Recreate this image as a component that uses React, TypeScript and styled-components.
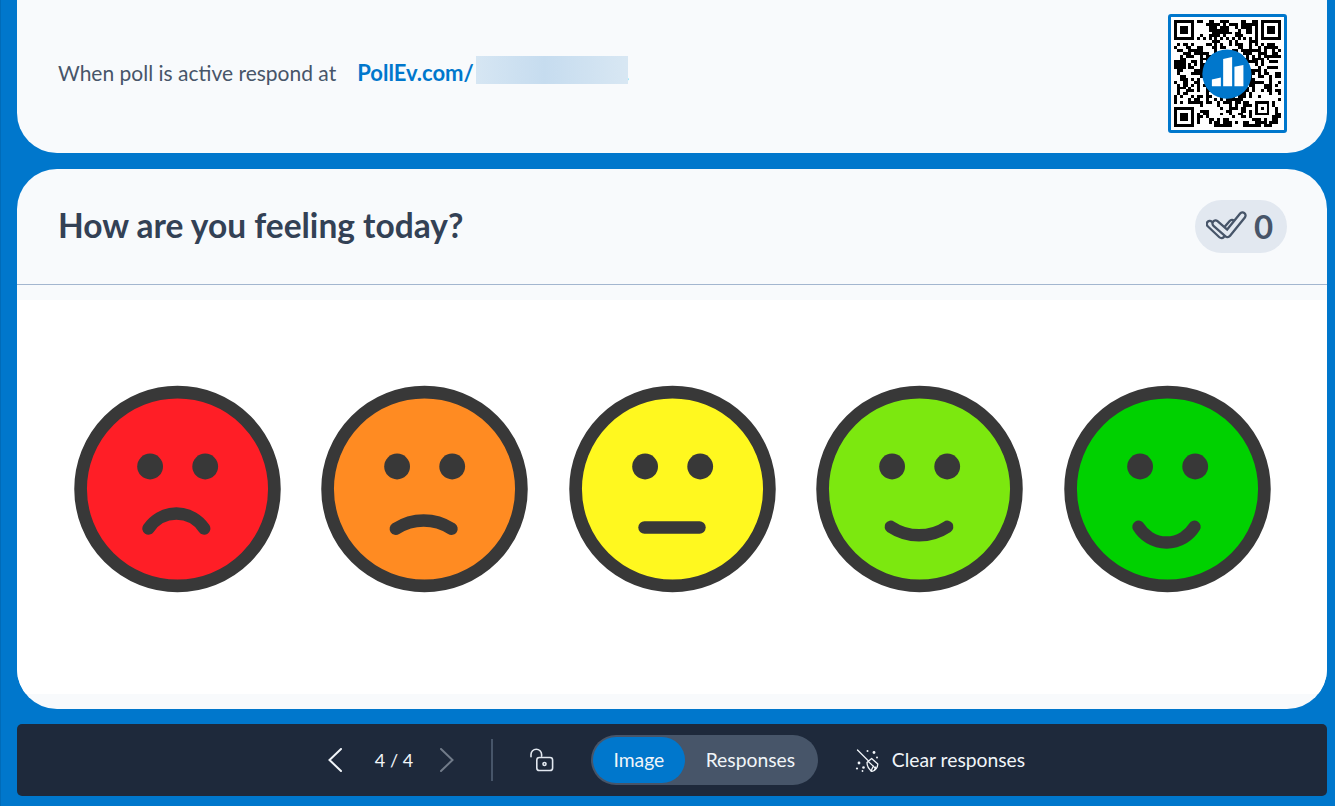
import React from "react";
import styled, { createGlobalStyle } from "styled-components";

const GlobalStyle = createGlobalStyle`
  html, body { margin: 0; padding: 0; height: 806px; overflow: hidden; background: #0077cc; }
  body { font-family: "Lato", "Noto Sans", sans-serif; }
  #root { height: 806px; }
`;

const Page = styled.div`
  box-sizing: border-box;
  height: 806px;
  display: flex;
  flex-direction: column;
  padding: 0 8px 10px 16px;
  border-left: 1px solid #006bb8;
  background: #0077cc;
`;

const PollBar = styled.header`
  box-sizing: border-box;
  height: 153px;
  flex: none;
  display: flex;
  align-items: flex-start;
  justify-content: space-between;
  padding: 14px 40px 0 41px;
  background: #f8fafc;
  border-radius: 0 0 40px 40px;
`;

const RespondText = styled.div`
  height: 117px;
  display: flex;
  align-items: center;
  font-size: 21px;
  color: #475569;
`;

const RespondLink = styled.span`
  margin-left: 21px;
  font-size: 22px;
  font-weight: 700;
  color: #0077cc;
  display: inline-flex;
  align-items: center;
`;

const Redacted = styled.span`
  display: inline-block;
  width: 152px;
  height: 28px;
  margin: 0 -4px 6px 2px;
  background: linear-gradient(90deg, #d6e6f3, #c6dcef 45%, #d8e7f3);
  filter: blur(0.6px);
`;

const QrFrame = styled.div`
  box-sizing: border-box;
  width: 119px;
  height: 119px;
  flex: none;
  padding: 3px;
  background: #fff;
  border: 3px solid #0077cc;
  border-radius: 3px;
  display: flex;
  filter: blur(0.3px);
`;

const QuestionCard = styled.section`
  height: 540px;
  flex: none;
  margin-top: 16px;
  display: flex;
  flex-direction: column;
  padding-bottom: 15px;
  box-sizing: border-box;
  background: #f8fafc;
  border-radius: 40px;
  overflow: hidden;
`;

const QuestionHeader = styled.div`
  box-sizing: border-box;
  height: 116px;
  flex: none;
  display: flex;
  align-items: center;
  justify-content: space-between;
  padding: 0 40px 0 41px;
  border-bottom: 1px solid #a3b6cf;
`;

const Title = styled.h1`
  margin: 0 0 4px;
  font-size: 33.5px;
  font-weight: 700;
  color: #334155;
`;

const CountBadge = styled.div`
  box-sizing: border-box;
  width: 92px;
  height: 53px;
  display: flex;
  align-items: center;
  gap: 7px;
  padding: 0 0 2px 11px;
  border-radius: 27px;
  background: #e2e8f0;
  font-size: 33px;
  font-weight: 700;
  color: #475569;
`;

const FaceStage = styled.div`
  flex: 1;
  margin-top: 15px;
  padding: 85px 0 0 0.5px;
  display: flex;
  justify-content: center;
  align-items: flex-start;
  gap: 40.5px;
  background: #fff;
`;

const Toolbar = styled.nav`
  box-sizing: border-box;
  height: 72px;
  flex: none;
  margin-top: 15px;
  padding-left: 9px;
  display: flex;
  align-items: center;
  justify-content: center;
  gap: 37px;
  background: #1e293b;
  border-radius: 5px;
  color: #f1f5f9;
  font-size: 19.3px;
`;

const Pager = styled.div`
  display: flex;
  align-items: center;
`;

const PageCount = styled.span`
  width: 36px;
  margin: 0 29px 0 33px;
  font-size: 18px;
  white-space: nowrap;
  text-align: center;
`;

const Divider = styled.div`
  width: 2px;
  height: 42px;
  background: #475569;
`;

const ViewToggle = styled.div`
  box-sizing: border-box;
  width: 227px;
  height: 50px;
  padding: 2px;
  display: flex;
  background: #475569;
  border-radius: 25px;
`;

const ToggleOption = styled.div<{ $active?: boolean }>`
  box-sizing: border-box;
  width: ${(p) => (p.$active ? "92px" : "131px")};
  padding-bottom: 2px;
  display: flex;
  align-items: center;
  justify-content: center;
  border-radius: 23px;
  background: ${(p) => (p.$active ? "#0077cc" : "transparent")};
`;

const ClearButton = styled.div`
  display: flex;
  align-items: center;
  gap: 13px;
`;

const ClearLabel = styled.span`
  margin-bottom: 2px;
`;

const Icon = styled.svg`
  display: block;
  flex: none;
`;

// module matrix: finder + timing + alignment patterns are real, the data area is seeded noise
const QR_SIZE = 37;
function buildQr(): boolean[][] {
  let seed = 20240;
  const next = () => {
    seed = (seed * 1103515245 + 12345) & 0x7fffffff;
    return seed / 0x7fffffff;
  };
  const grid: boolean[][] = [];
  for (let y = 0; y < QR_SIZE; y++) {
    const row: boolean[] = [];
    for (let x = 0; x < QR_SIZE; x++) {
      const prevLeft = x > 0 ? row[x - 1] : false;
      const prevUp = y > 0 ? grid[y - 1][x] : false;
      row.push(next() < 0.36 + (prevLeft ? 0.12 : 0) + (prevUp ? 0.12 : 0));
    }
    grid.push(row);
  }
  const stamp = (ox: number, oy: number, size: number) => {
    for (let y = -1; y <= size; y++) {
      for (let x = -1; x <= size; x++) {
        const gx = ox + x;
        const gy = oy + y;
        if (gx < 0 || gy < 0 || gx >= QR_SIZE || gy >= QR_SIZE) continue;
        const edge = Math.max(Math.abs(x - (size - 1) / 2), Math.abs(y - (size - 1) / 2));
        const half = (size - 1) / 2;
        grid[gy][gx] = edge === half || (edge <= half - 2 && edge >= 0);
      }
    }
  };
  stamp(0, 0, 7);
  stamp(QR_SIZE - 7, 0, 7);
  stamp(0, QR_SIZE - 7, 7);
  stamp(28, 28, 5);
  for (let i = 8; i < QR_SIZE - 8; i++) {
    grid[6][i] = i % 2 === 0;
    grid[i][6] = i % 2 === 0;
  }
  return grid;
}

const qrGrid = buildQr();

function QrCode() {
  let d = "";
  qrGrid.forEach((row, y) =>
    row.forEach((on, x) => {
      if (on) d += `M${x} ${y}h1v1h-1z`;
    })
  );
  return (
    <QrFrame>
      <Icon width="107" height="107" viewBox="0 0 37 37">
        <path d={d} fill="#000" shapeRendering="crispEdges" />
        <circle cx="18.3" cy="18.7" r="8.5" fill="#0077cc" />
        <path d="M13.1 20.6 L16.2 19.9 V22.9 H13.1 Z M17 13.5 L20.1 12.8 V22.9 H17 Z M20.9 16.2 L24 15.6 V22.9 H20.9 Z" fill="#fff" />
      </Icon>
    </QrFrame>
  );
}

function DoubleCheck() {
  const rear = "M3.8 13 L15.5 24 L26 12";
  const front = "M9.5 12.5 L21.5 23 L36.5 4.5";
  return (
    <Icon width="41" height="30" viewBox="0 0 41 30" fill="none" strokeLinecap="round" strokeLinejoin="round">
      <path d={rear} stroke="#475569" strokeWidth="8.4" />
      <path d={rear} stroke="#e2e8f0" strokeWidth="3.8" />
      <path d={front} stroke="#475569" strokeWidth="8.4" />
      <path d={front} stroke="#e2e8f0" strokeWidth="3.8" />
    </Icon>
  );
}

type FaceProps = { fill: string; mouth: string };

function Face({ fill, mouth }: FaceProps) {
  return (
    <Icon width="207" height="208" viewBox="-103.5 -104 207 208">
      <circle r="96.9" fill={fill} stroke="#383838" strokeWidth="12.7" />
      <circle cx="-27.4" cy="-22.5" r="12.9" fill="#383838" />
      <circle cx="27.7" cy="-22.5" r="12.9" fill="#383838" />
      <path d={mouth} fill="none" stroke="#383838" strokeWidth="12.4" strokeLinecap="round" />
    </Icon>
  );
}

const faces: FaceProps[] = [
  { fill: "#ff1e26", mouth: "M-29 39.5 A33.4 33.4 0 0 1 26.7 39.5" },
  { fill: "#ff8b22", mouth: "M-28.7 39.8 A51 51 0 0 1 27 39.8" },
  { fill: "#fff81f", mouth: "M-28 38.5 H27" },
  { fill: "#7ce80f", mouth: "M-28.7 37.8 A51 51 0 0 0 27.7 37.8" },
  { fill: "#00d100", mouth: "M-29 37.8 A32.8 32.8 0 0 0 27 37.8" },
];

export default function App() {
  return (
    <Page>
      <GlobalStyle />
      <PollBar>
        <RespondText>
          When poll is active respond at
          <RespondLink>
            PollEv.com/
            <Redacted />.
          </RespondLink>
        </RespondText>
        <QrCode />
      </PollBar>

      <QuestionCard>
        <QuestionHeader>
          <Title>How are you feeling today?</Title>
          <CountBadge>
            <DoubleCheck />0
          </CountBadge>
        </QuestionHeader>
        <FaceStage>
          {faces.map((face) => (
            <Face key={face.fill} {...face} />
          ))}
        </FaceStage>
      </QuestionCard>

      <Toolbar>
        <Pager>
          <Icon width="14" height="24" viewBox="0 0 14 24" fill="none">
            <path d="M13 1 L1.5 12 L13 23" stroke="#f1f5f9" strokeWidth="2" strokeLinecap="round" />
          </Icon>
          <PageCount>4 / 4</PageCount>
          <Icon width="14" height="24" viewBox="0 0 14 24" fill="none">
            <path d="M1 1 L12.5 12 L1 23" stroke="#717b89" strokeWidth="2" strokeLinecap="round" />
          </Icon>
        </Pager>
        <Divider />
        <Icon width="24" height="24" viewBox="0 0 24 24" fill="none" stroke="#e2e8f0" strokeWidth="1.6">
          <rect x="6.8" y="9.5" width="15.8" height="13" rx="2.6" />
          <circle cx="14.5" cy="16" r="1.5" />
          <path d="M1 8.8 V6.5 A5.3 5.3 0 0 1 11.6 6.5 V8.2" strokeLinecap="round" />
        </Icon>
        <ViewToggle>
          <ToggleOption $active>Image</ToggleOption>
          <ToggleOption>Responses</ToggleOption>
        </ViewToggle>
        <ClearButton>
          <Icon width="24" height="24" viewBox="0 0 24 24" fill="none" stroke="#f1f5f9" strokeWidth="1.3" strokeLinecap="round" strokeLinejoin="round">
            <path d="M2.5 2 L13.5 13" />
            <path d="M12 14.6 L16.6 10.4 L22.8 16 C22.6 19.4 20.2 22.6 16.8 23.4 C14.2 21.4 12 18.4 12 14.6 Z" />
            <path d="M13.4 13.6 L20.6 20.4 M16 23 L18.4 18 M19.6 21.6 L20.8 19" />
            <g fill="#f1f5f9" stroke="none">
              <circle cx="19" cy="4.5" r="1.4" />
              <circle cx="12.5" cy="3" r="1" />
              <circle cx="22" cy="9.5" r="1" />
              <circle cx="4" cy="15" r="1.4" />
              <circle cx="2" cy="20.5" r="1.1" />
              <circle cx="8.5" cy="19.5" r="1.3" />
              <circle cx="7.5" cy="23" r="0.9" />
            </g>
          </Icon>
          <ClearLabel>Clear responses</ClearLabel>
        </ClearButton>
      </Toolbar>
    </Page>
  );
}
